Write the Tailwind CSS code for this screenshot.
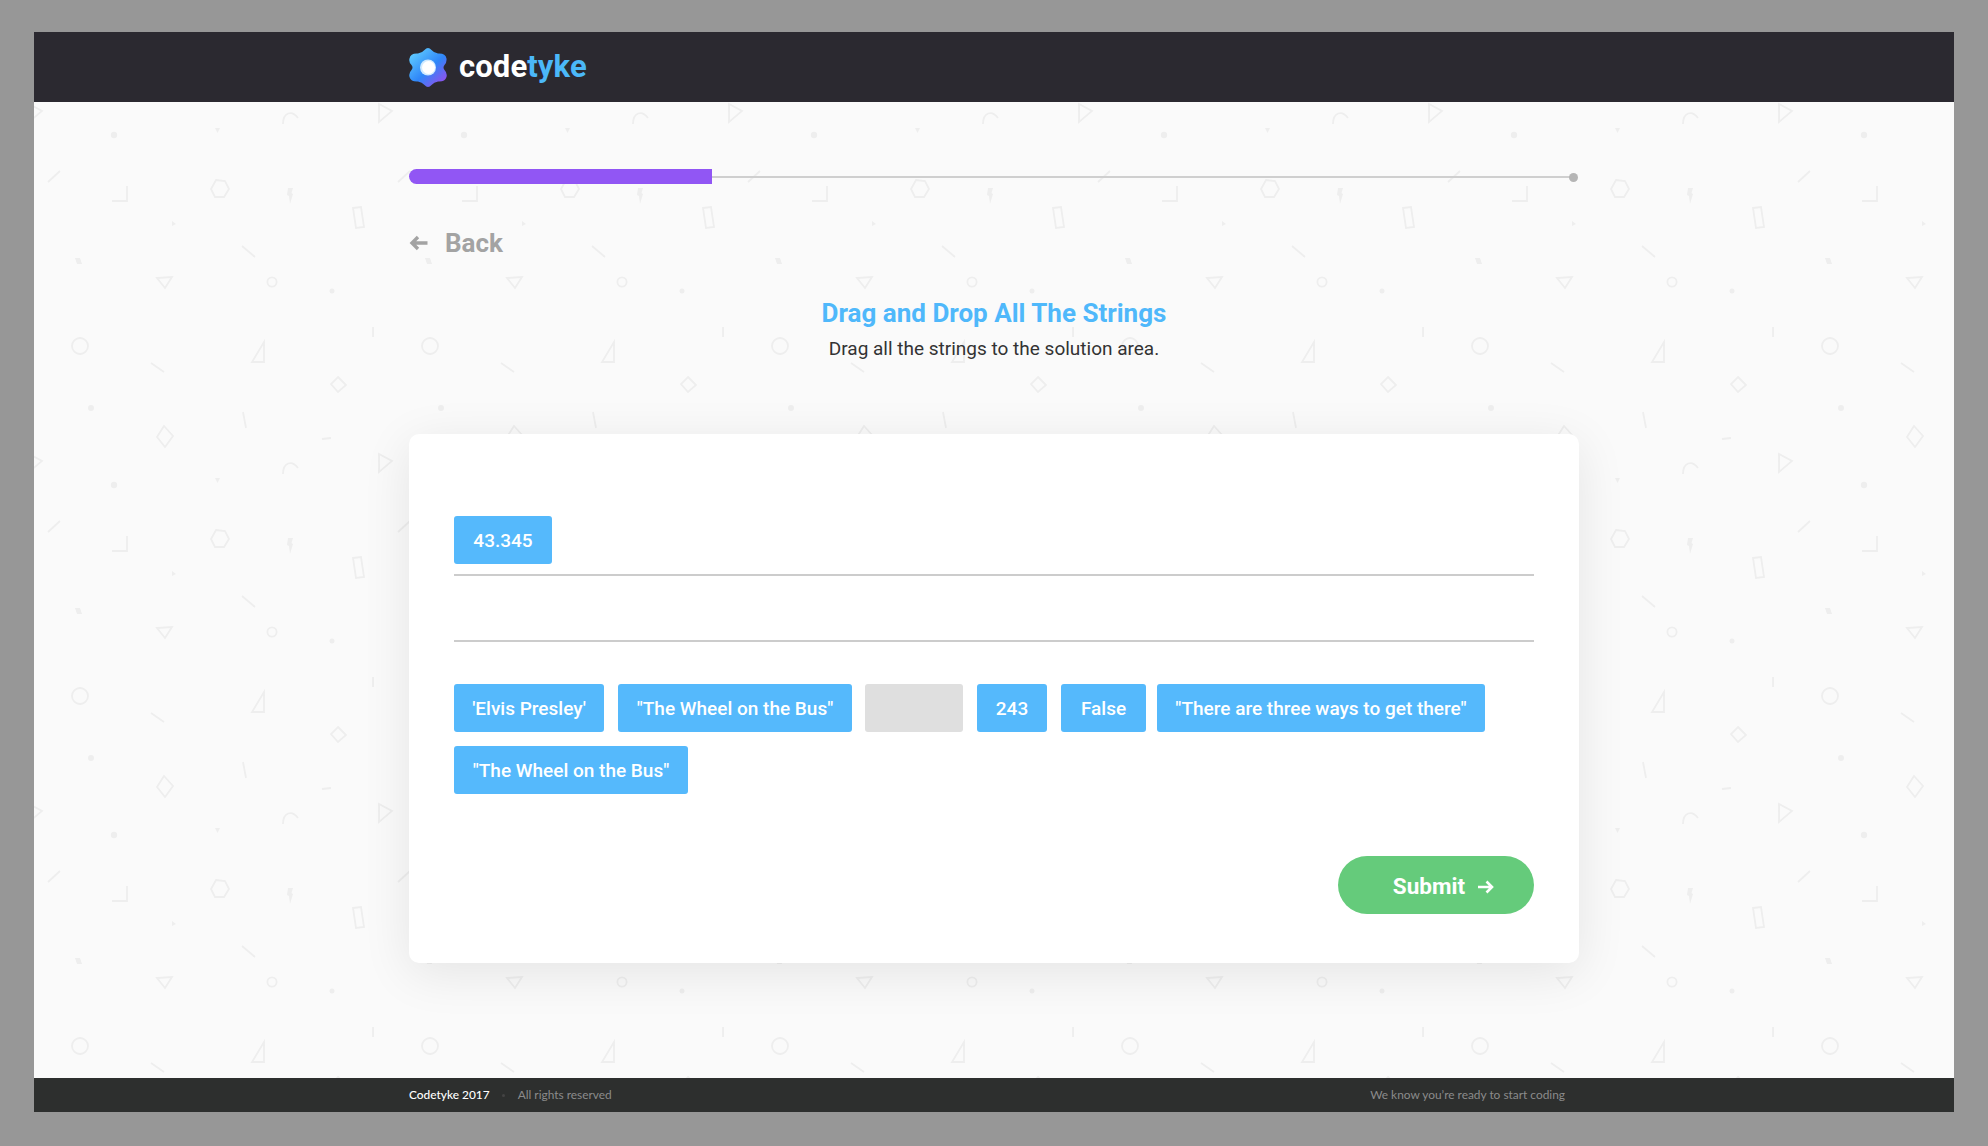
<!DOCTYPE html>
<html lang="en">
<head>
    <meta charset="UTF-8">
    <meta name="viewport" content="width=device-width, initial-scale=1.0">
    <title>Codetyke</title>
    <script src="https://cdn.jsdelivr.net/npm/@tailwindcss/browser@4"></script>
</head>
<body class="bg-[#979797] h-screen overflow-hidden pt-[32px] px-[34px] font-['Roboto',sans-serif]">
    <div class="h-[1080px] flex flex-col">
        <!-- Header -->
        <header class="h-[70px] bg-[#2b2930] shrink-0">
            <div class="w-[1170px] mx-auto h-full flex items-center gap-[12px] pb-[2px]">
                <svg class="w-[38px] h-[41px] mt-[2px]" viewBox="0 0 38 41">
                    <defs>
                        <linearGradient id="logoGrad" x1="0.1" y1="0.1" x2="0.85" y2="0.95">
                            <stop offset="0" stop-color="#5fcbff"/>
                            <stop offset="0.55" stop-color="#2f86f8"/>
                            <stop offset="1" stop-color="#9150ee"/>
                        </linearGradient>
                    </defs>
                    <path fill="url(#logoGrad)" d="M15.5 3Q19 -1 22.5 3Q25 6 29 6.5Q36.5 6 37.5 11.5Q38 15 35.5 18Q33.5 20.5 35.5 23Q38.5 26 37.5 30Q36 35 29 34.5Q25 35 22.5 38Q19 42 15.5 38Q13 35 9 34.5Q2 35 .5 30Q-.5 26 2.5 23Q4.5 20.5 2.5 18Q-.5 15 .5 11.5Q1.5 6 9 6.5Q13 6 15.5 3Z"/>
                    <circle cx="19" cy="20.5" r="8" fill="#cfeaff"/>
                    <circle cx="19.5" cy="20.5" r="6.5" fill="#fff"/>
                </svg>
                <span class="text-[31px] leading-none font-bold text-white tracking-[0.1px]">code<span class="text-[#4bb8f8]">tyke</span></span>
            </div>
        </header>

        <!-- Main -->
        <main class="relative flex-1 bg-[#fafafa] overflow-hidden">
            <svg class="absolute inset-0 w-full h-full" aria-hidden="true">
                <defs>
                    <pattern id="bgTile" x="-4" y="-2" width="350" height="350" patternUnits="userSpaceOnUse">
                        <g fill="none" stroke="#eeeeee" stroke-width="1.8">
                            <path d="M349 4V22L362 11Z"/>
                            <path d="M-1 4V22L12 11Z"/>
                            <path d="M253 24C253 12 262 10 268 18"/>
                            <path d="M18 82L30 71"/>
                            <path d="M82 101H97V86"/>
                            <path d="M186 80L195 81L199 89L194 97L185 97L181 89Z"/>
                            <path d="M323 108L331 107L334 127L326 128Z"/>
                            <path d="M212 146L225 157"/>
                            <path d="M127 178L142 177L135 188Z"/>
                            <circle cx="242" cy="182" r="4.6"/>
                            <path d="M343 227V237"/>
                            <circle cx="50" cy="246" r="8"/>
                            <path d="M121 263L134 272"/>
                            <path d="M234 242V262H222Z"/>
                            <path d="M308 277L316 285L308 292L301 284Z"/>
                            <path d="M134 326L143 336L135 347L127 337Z"/>
                            <path d="M213 312L216 328"/>
                            <path d="M292 339L301 338"/>
                        </g>
                        <g fill="#eeeeee">
                            <circle cx="84" cy="35" r="3.2"/>
                            <path d="M185 28H190L187.5 33Z"/>
                            <path d="M258 88L263 88L261.5 93L263 94L260 104L259 96L257 95Z"/>
                            <path d="M142 121L146 124L142 126Z"/>
                            <path d="M45 158L50 158L52 164L47 164Z"/>
                            <circle cx="302" cy="191" r="2.5"/>
                            <circle cx="61" cy="308" r="3"/>
                        </g>
                    </pattern>
                </defs>
                <rect width="100%" height="100%" fill="url(#bgTile)"/>
            </svg>

            <div class="relative w-[1170px] mx-auto pt-[67px]">
                <!-- Progress -->
                <div class="relative h-[15px] flex items-center">
                    <div class="w-[303px] h-[15px] bg-[#9156f4] rounded-l-full shrink-0"></div>
                    <div class="flex-1 h-[2px] bg-[#cfcfcf] mr-[5px]"></div>
                    <div class="absolute right-[1px] top-[3.5px] w-[9px] h-[9px] rounded-full bg-[#b5b5b5]"></div>
                </div>

                <!-- Back -->
                <div class="mt-[43px] flex items-center gap-[17px] text-[#a3a3a3] h-[32px]">
                    <svg class="w-[19px] h-[16px]" viewBox="0 0 19 16" fill="none" stroke="currentColor" stroke-width="3.4">
                        <path d="M18.5 8H3M9 2L3 8L9 14"/>
                    </svg>
                    <span class="text-[26px] leading-none font-bold">Back</span>
                </div>

                <!-- Title -->
                <div class="text-center mt-[38px]">
                    <h1 class="text-[26px] leading-[32px] font-bold text-[#4fb8fb]">Drag and Drop All The Strings</h1>
                    <p class="text-[19px] leading-[24px] mt-[8px] text-[#333333]">Drag all the strings to the solution area.</p>
                </div>

                <!-- Card -->
                <div class="mt-[73px] h-[529px] bg-white rounded-[10px] shadow-[0_10px_50px_rgba(0,0,0,0.09)] px-[45px] pt-[82px]">
                    <div class="h-[60px] border-b-2 border-[#cccccc]">
                        <div class="w-[98px] h-[48px] pt-[2px] bg-[#55b9fc] rounded-[3px] text-white text-[19px] font-medium flex items-center justify-center">43.345</div>
                    </div>
                    <div class="h-[66px] border-b-2 border-[#cccccc]"></div>

                    <div class="mt-[42px] flex flex-wrap gap-y-[14px] text-white text-[19px] font-medium">
                        <div class="w-[150px] h-[48px] pt-[2px] mr-[14px] bg-[#55b9fc] rounded-[3px] flex items-center justify-center">'Elvis Presley'</div>
                        <div class="w-[234px] h-[48px] pt-[2px] mr-[13px] bg-[#55b9fc] rounded-[3px] flex items-center justify-center">"The Wheel on the Bus"</div>
                        <div class="w-[98px] h-[48px] mr-[14px] bg-[#dfdfdf] rounded-[3px]"></div>
                        <div class="w-[70px] h-[48px] pt-[2px] mr-[14px] bg-[#55b9fc] rounded-[3px] flex items-center justify-center">243</div>
                        <div class="w-[85px] h-[48px] pt-[2px] mr-[11px] bg-[#55b9fc] rounded-[3px] flex items-center justify-center">False</div>
                        <div class="w-[328px] h-[48px] pt-[2px] mr-[14px] bg-[#55b9fc] rounded-[3px] flex items-center justify-center">"There are three ways to get there"</div>
                        <div class="w-[234px] h-[48px] pt-[2px] bg-[#55b9fc] rounded-[3px] flex items-center justify-center">"The Wheel on the Bus"</div>
                    </div>

                    <div class="mt-[62px] flex justify-end">
                        <button class="w-[196px] h-[58px] pt-[3px] bg-[#65cb7b] rounded-full text-white font-bold text-[22.5px] flex items-center justify-end gap-[13px] pr-[40px]">
                            <span>Submit</span>
                            <svg class="w-[16px] h-[14px] mt-[1px]" viewBox="0 0 16 14" fill="none" stroke="currentColor" stroke-width="2.6">
                                <path d="M0 7H14M8.5 1.5L14 7L8.5 12.5"/>
                            </svg>
                        </button>
                    </div>
                </div>
            </div>
        </main>

        <!-- Footer -->
        <footer class="h-[34px] bg-[#2d2f2e] shrink-0">
            <div class="w-[1170px] mx-auto h-full flex items-center text-[11.9px] font-['Lato',sans-serif]">
                <span class="text-white font-medium">Codetyke 2017</span>
                <span class="w-[3px] h-[3px] rounded-full bg-[#444444] ml-[12px] mr-[13px]"></span>
                <span class="text-[#8b8b8b]">All rights reserved</span>
                <span class="ml-auto mr-[14px] text-[#8b8b8b]">We know you’re ready to start coding</span>
            </div>
        </footer>
    </div>
</body>
</html>
